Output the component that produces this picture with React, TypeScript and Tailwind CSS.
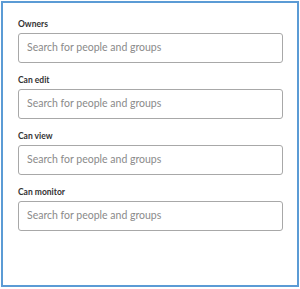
export default function App() {
  const sections = ["Owners", "Can edit", "Can view", "Can monitor"];
  return (
    <div className="w-[300px] h-[289px] bg-white p-px" style={{ fontFamily: 'Lato, "Noto Sans", sans-serif' }}>
      <div className="w-[298px] h-[286px] border-[2px] border-[#5b9bd5] pt-[16px] pl-[15px] pr-[13px] flex flex-col gap-[12px]">
        {sections.map((s) => (
          <div key={s} className="flex flex-col gap-[3px]">
            <div className="text-[8.5px] leading-[11px] font-bold text-[#333]">{s}</div>
            <div className="h-[30px] w-[265px] border border-[#a8a8a8] rounded-[3px] flex items-center pl-[8px] text-[10.5px] text-[#8a8a8a]">
              Search for people and groups
            </div>
          </div>
        ))}
      </div>
    </div>
  );
}
